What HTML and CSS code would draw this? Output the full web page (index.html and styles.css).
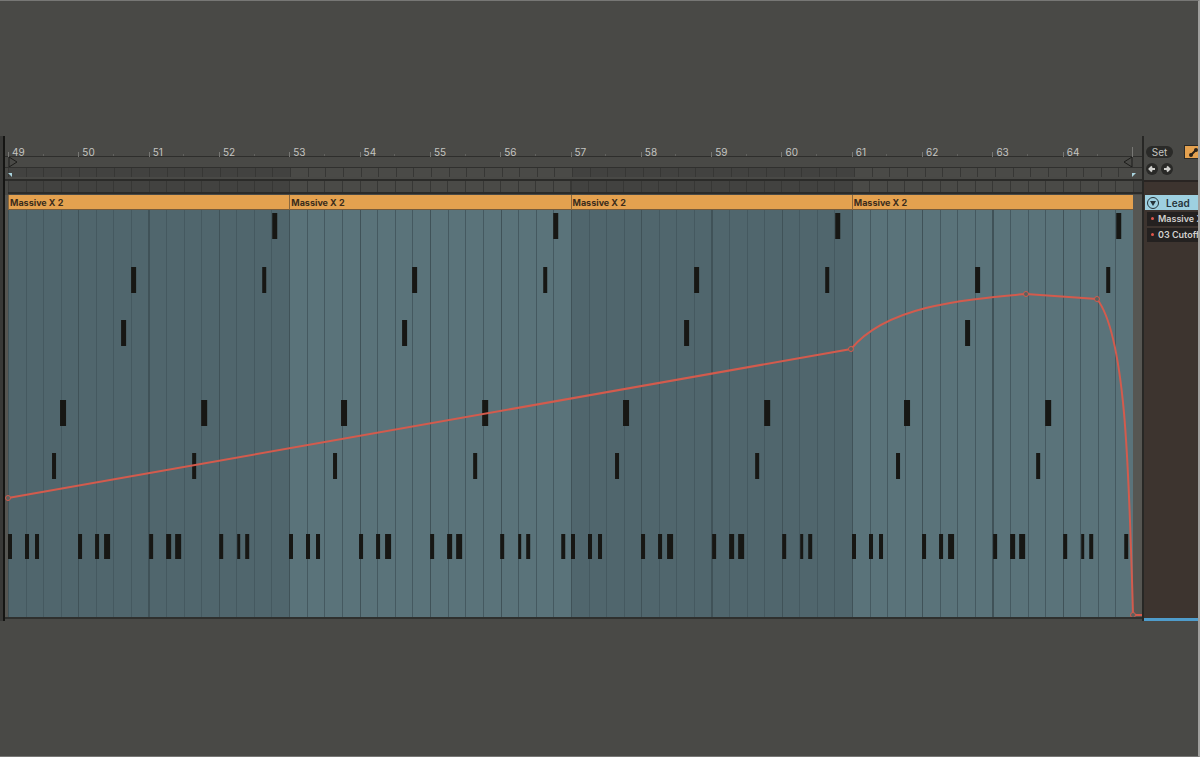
FILE: index.html
```
<!DOCTYPE html>
<html lang="en">
<head>
  <meta charset="UTF-8" />
  <meta name="viewport" content="width=device-width, initial-scale=1.0"/>
  <title>Arrangement - Massive X 2</title>
  <link rel="stylesheet" href="styles.css">
</head>
<body>
  <!-- notes shared by every clip -->
  <svg class="defs" aria-hidden="true">
    <symbol id="notes" viewBox="0 0 281 407" preserveAspectRatio="none">
      <path d="M264 3h5v26h-5z M123 57h5v26h-5z M254 57h4v26h-4z M113 110h5v26h-5z
        M52 190h6v26h-6z M193 190h6v26h-6z M44 243h4v26h-4z M184 243h4v26h-4z
        M0 324h4v25h-4z M17 324h4v25h-4z M27 324h4v25h-4z
        M70 324h4v25h-4z M87 324h4v25h-4z M96 324h6v25h-6z
        M141 324h4v25h-4z M158 324h5v25h-5z M167 324h6v25h-6z
        M211 324h4v25h-4z M229 324h3v25h-3z M237 324h4v25h-4z"/>
    </symbol>
  </svg>

  <main class="arrangement">
    <section class="timeline">
      <div class="ruler">
        <span>49</span><span>50</span><span>51</span><span>52</span>
        <span>53</span><span>54</span><span>55</span><span>56</span>
        <span>57</span><span>58</span><span>59</span><span>60</span>
        <span>61</span><span>62</span><span>63</span><span>64</span>
      </div>
      <div class="loop">
        <svg width="10" height="10" viewBox="0 0 10 10"><path d="M1 0v10L9 5z"/></svg>
        <svg width="10" height="10" viewBox="0 0 10 10"><path d="M9 0v10L1 5z"/></svg>
      </div>
      <div class="scrub markers">
        <svg width="4" height="4" viewBox="0 0 4 4"><path d="M0 0h4v4z"/></svg>
        <svg width="4" height="4" viewBox="0 0 4 4"><path d="M0 0h4L0 4z"/></svg>
      </div>
      <div class="scrub"></div>

      <div class="track">
        <article class="clip">
          <h2>Massive X 2</h2>
          <svg class="notes"><use href="#notes"/></svg>
        </article>
        <article class="clip light">
          <h2>Massive X 2</h2>
          <svg class="notes" viewBox="0 0 281 407" preserveAspectRatio="none"><use href="#notes" width="281" height="407"/><path d="M272 324h4v25h-4z"/></svg>
        </article>
        <article class="clip">
          <h2>Massive X 2</h2>
          <svg class="notes"><use href="#notes"/></svg>
        </article>
        <article class="clip light">
          <h2>Massive X 2</h2>
          <svg class="notes" viewBox="0 0 281 407" preserveAspectRatio="none"><use href="#notes" width="281" height="407"/><path d="M272 324h4v25h-4z"/></svg>
        </article>

        <svg class="automation" viewBox="0 0 1137 422" preserveAspectRatio="none">
          <path d="M3 303L846 154C882 111 956 105 1021 99L1092 104C1121 141 1124 277 1128 420H1137"/>
          <circle cx="3" cy="303" r="2.5"/>
          <circle cx="846" cy="154" r="2.5"/>
          <circle cx="1021" cy="99" r="2.5"/>
          <circle cx="1092" cy="104" r="2.5"/>
          <circle cx="1128" cy="420" r="2.5"/>
        </svg>
      </div>
      <div class="track-end"></div>
    </section>

    <aside class="headers">
      <div class="controls">
        <div class="control-row">
          <button class="set">Set</button>
          <button class="auto" aria-label="Automation mode">
            <svg width="14" height="12" viewBox="0 0 14 12"><path d="M6 9L11 4"/><circle cx="6" cy="9" r="1"/><circle cx="11" cy="4" r="1"/></svg>
          </button>
        </div>
        <div class="control-row arrows">
          <button class="round" aria-label="Previous locator"><svg width="12" height="12" viewBox="0 0 12 12"><path d="M9 6H4M6 3.5L3.5 6L6 8.5"/></svg></button>
          <button class="round" aria-label="Next locator"><svg width="12" height="12" viewBox="0 0 12 12"><path d="M3 6H8M6 3.5L8.5 6L6 8.5"/></svg></button>
        </div>
      </div>
      <div class="track-header">
        <button class="track-name">
          <svg width="14" height="14" viewBox="0 0 14 14"><circle cx="7" cy="7" r="5.5"/><path d="M4 5h6L7 10z"/></svg>
          Lead
        </button>
        <button class="lane">Massive X</button>
        <button class="lane">03 Cutoff</button>
      </div>
      <div class="next-track"></div>
    </aside>
  </main>
</body>
</html>
```
FILE: styles.css
```
* {
  box-sizing: border-box;
}

body {
  margin: 0;
  min-height: 100vh;
  padding-top: 135px;
  background: #494946;
  border: 1px solid #777775;
  border-left: none;
  border-right: 2px solid #a0a09e;
  font-family: Inter, sans-serif;
  color: #c4c4c1;
  overflow-x: hidden;
}

.defs {
  position: absolute;
  width: 0;
  height: 0;
}

.arrangement {
  display: flex;
  border-left: 3px solid #393937;
}

.timeline {
  flex: 1;
  min-width: 0;
  border-left: 2px solid #151513;
  border-right: 2px solid #272725;
}

.ruler {
  display: grid;
  grid-template-columns: repeat(16, 1fr);
  height: 21px;
  padding: 11px 9px 0 3px;
  border-bottom: 1px solid #2e2e2c;
  font-size: 10px;
  line-height: 10px;
}

.ruler span {
  padding-left: 4px;
  background:
    linear-gradient(#777774, #777774) 0 5px / 1px 5px no-repeat,
    linear-gradient(#62625f, #62625f) 50% 7px / 1px 2px no-repeat;
}

.ruler span:last-child {
  border-right: 1px solid #777774;
}

.loop {
  display: flex;
  justify-content: space-between;
  height: 11px;
  padding: 0 9px 0 3px;
  border-bottom: 1px solid #30302e;
}

.loop svg {
  fill: none;
  stroke: #1c1c1a;
}

.scrub {
  height: 13px;
  margin-left: 3px;
  padding-right: 9px;
  border-bottom: 2px solid #2b2b29;
  background:
    repeating-linear-gradient(90deg, #373735 0 1px, transparent 1px 1.5625%),
    linear-gradient(90deg, #424240 0 25%, #4a4a47 25% 50%, #424240 50% 75%, #4a4a47 75%);
  background-origin: content-box;
}

.markers {
  display: flex;
  justify-content: space-between;
  align-items: flex-end;
  margin-left: 0;
  padding: 0 6px 2px 3px;
  background-clip: content-box;
}

.markers svg {
  fill: #a9d3de;
}

.track {
  position: relative;
  display: grid;
  grid-template-columns: repeat(4, 1fr);
  margin-top: 1px;
  padding: 0 9px 0 3px;
  background: #565652;
}

.clip {
  background: #50666d;
}

.clip.light {
  background: #5a737a;
}

.clip h2 {
  margin: 0;
  height: 15px;
  padding-left: 1px;
  border-left: 1px solid #8b683d;
  border-bottom: 1px solid #755b3c;
  background: #e4a14f;
  color: #3b2c1b;
  font-size: 9px;
  line-height: 15px;
  font-weight: 700;
}

.notes {
  display: block;
  width: 100%;
  height: 407px;
  fill: #171714;
  background:
    repeating-linear-gradient(90deg, #405258 0 1px, transparent 1px 25%),
    repeating-linear-gradient(90deg, #455960 0 1px, transparent 1px 6.25%);
}

.automation {
  position: absolute;
  inset: 0;
  width: 100%;
  height: 100%;
  fill: none;
  stroke: #d35b4d;
  stroke-width: 2;
}

.automation circle {
  fill: #5a625f;
  stroke-width: 1;
}

.track-end {
  height: 4px;
  border-top: 2px solid #2f302e;
}

.headers {
  display: flex;
  flex-direction: column;
  width: 54px;
  overflow: hidden;
  background: #3d342f;
}

.headers button {
  font-family: inherit;
  border: none;
  cursor: pointer;
}

.controls {
  height: 44px;
  padding: 10px 0 0 2px;
  background: #494946;
}

.control-row {
  display: flex;
  gap: 12px;
}

.control-row.arrows {
  gap: 3px;
  padding-top: 5px;
}

.set {
  flex: none;
  width: 27px;
  height: 12px;
  padding: 0;
  border-radius: 6px;
  background: #2a2a28;
  color: #c4c4c1;
  font-size: 10px;
  line-height: 12px;
}

.auto {
  flex: none;
  height: 12px;
  padding: 0;
  background: #e4a14f;
  outline: 1px solid #2a2a28;
}

.auto svg,
.round svg,
.track-name svg {
  display: block;
}

.auto svg {
  stroke: #2a2218;
  stroke-width: 2;
}

.round {
  width: 12px;
  height: 12px;
  padding: 0;
  border-radius: 50%;
  background: #292927;
}

.round svg {
  fill: none;
  stroke: #d0d0cd;
  stroke-width: 2;
}

.track-header {
  display: flex;
  flex-direction: column;
  align-items: flex-start;
  gap: 2px;
  padding: 13px 0 0 1px;
  border-top: 2px solid #292422;
}

.track-name {
  display: flex;
  align-items: center;
  gap: 6px;
  width: 100%;
  height: 15px;
  padding: 0 1px;
  background: #9ed0e0;
  color: #26343a;
  font-size: 10px;
  font-weight: 600;
}

.track-name svg {
  fill: none;
  stroke: #26343a;
}

.track-name path {
  fill: #26343a;
  stroke: none;
}

.lane {
  width: 80px;
  height: 14px;
  margin-left: 2px;
  padding: 0 0 0 4px;
  background: #242120;
  color: #d2d0cd;
  font-size: 9px;
  line-height: 14px;
  font-weight: 600;
  text-align: left;
  white-space: nowrap;
}

.lane::before {
  content: "";
  display: inline-block;
  width: 3px;
  height: 3px;
  margin-right: 4px;
  border-radius: 50%;
  background: #e0564b;
  vertical-align: 2px;
}

.next-track {
  height: 3px;
  margin-top: auto;
  background: #4f9ccb;
}
```
